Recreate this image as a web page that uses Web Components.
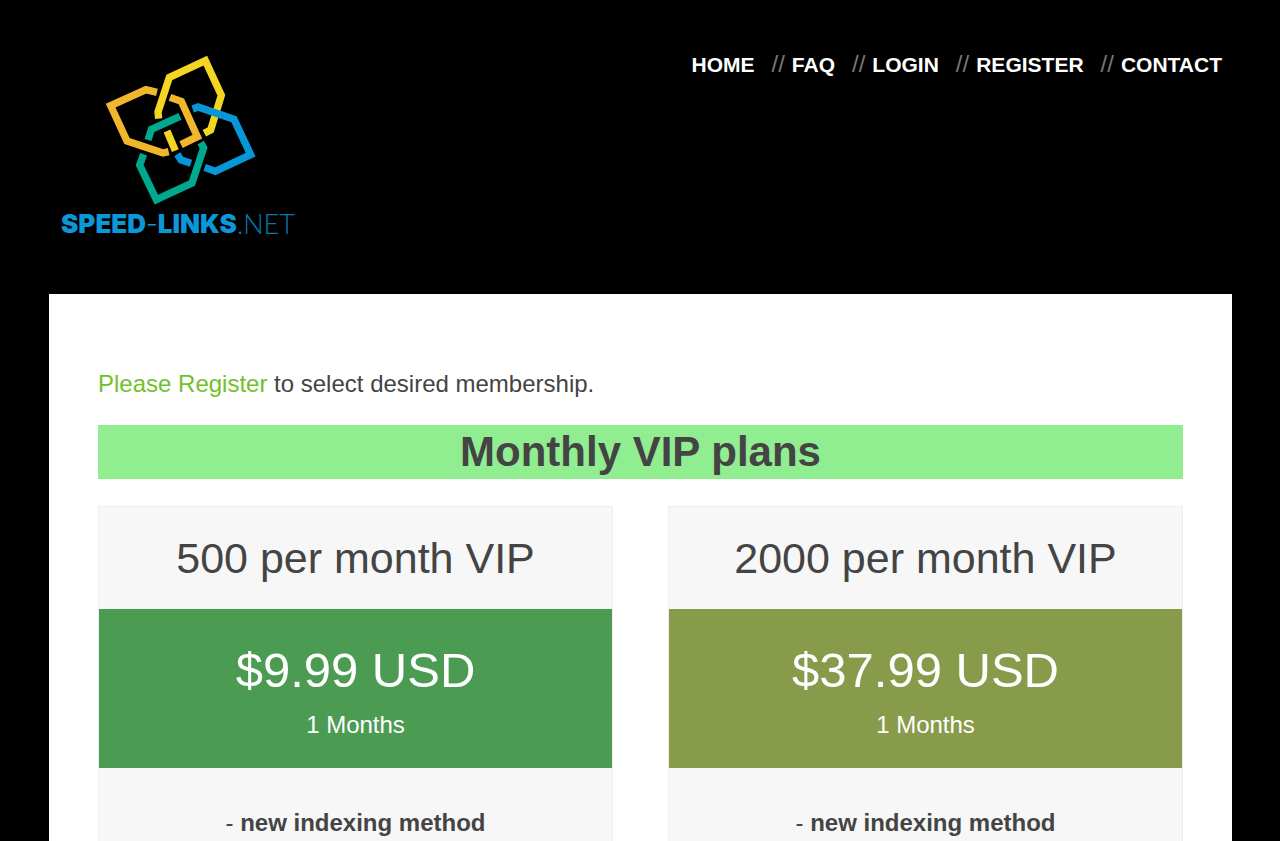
<!DOCTYPE html>
<html lang="en">
<head>
<meta charset="utf-8">
<title>Speed-Links.net</title>
<style>
body { margin: 0; background: #000; color: #444; font: 24px/32px "Liberation Sans", Arial, sans-serif; }
</style>
</head>
<body>
<speed-page></speed-page>
<script>
const define = (name, html) => {
  const template = document.createElement("template");
  template.innerHTML = html;
  customElements.define(name, class extends HTMLElement {
    constructor() {
      super();
      this.attachShadow({ mode: "open" }).append(template.content.cloneNode(true));
    }
  });
};

define("speed-logo", `
<style>
:host { display: block; }
a { display: block; width: 238px; color: #0a98d8; text-decoration: none; }
svg { display: block; width: 180px; height: 170px; margin-left: 29px; }
.name { display: flex; font: 900 26px/28px Inter, sans-serif; white-space: nowrap; }
.thin { font-weight: 300; }
.tld { font: 300 27px/28px Lato, sans-serif; color: #0a78ac; }
</style>
<a href="#">
<svg viewBox="0 0 540 510" fill="none" stroke-width="22" aria-hidden="true">
<path stroke="#f3d522" d="M206 236L204 216L238 112L346 62L394 166L362 270L343 280"/>
<path stroke="#f3d522" d="M231 273L256 332"/>
<path stroke="#f0b62c" d="M201 157L168 149L62 197L111 303L219 339L236 335"/>
<path stroke="#f0b62c" d="M240 172L274 184L322 290L273 314"/>
<path stroke="#00a88f" d="M270 229L184 268L174 300"/>
<path stroke="#00a88f" d="M161 343L149 375L199 479L306 429L341 324L332 308"/>
<path stroke="#0797d9" d="M308 207L324 201L432 238L482 344L376 394L344 382"/>
<path stroke="#0797d9" d="M262 343L273 360L303 370"/>
</svg>
<span class="name"><span>SPEED<span class="thin">-</span>LINKS</span><span class="tld">.NET</span></span>
</a>`);

define("nav-item", `
<style>
:host { display: flex; align-items: baseline; white-space: nowrap; }
:host(:not(:first-child))::before { content: "//"; color: #777; margin-right: 7px; }
::slotted(a) { color: #fff; font-size: 21px; font-weight: bold; text-decoration: none; }
</style><slot></slot>`);

define("site-header", `
<style>
:host { display: flex; justify-content: space-between; align-items: flex-start; padding: 40px 58px 56px 61px; }
nav { display: flex; align-items: baseline; gap: 17px; padding-top: 8px; }
</style>
<speed-logo></speed-logo>
<nav aria-label="Main">
<nav-item><a href="#">HOME</a></nav-item>
<nav-item><a href="#">FAQ</a></nav-item>
<nav-item><a href="#">LOGIN</a></nav-item>
<nav-item><a href="#">REGISTER</a></nav-item>
<nav-item><a href="#">CONTACT</a></nav-item>
</nav>`);

define("plan-card", `
<style>
:host { display: block; border: 1px solid #eee; background: #f7f7f7; text-align: center; }
.title { padding: 26px 16px; }
::slotted(h3) { margin: 0; font-size: 43px; font-weight: normal; line-height: 50px; }
.cost { background: var(--plan-color); color: #fff; padding: 31px 16px 27px; }
.price { font-size: 49px; line-height: 60px; }
.term { padding-top: 9px; }
.details { padding: 39px 16px; }
</style>
<div class="title"><slot name="title"></slot></div>
<div class="cost"><div class="price"><slot name="price"></slot></div><div class="term"><slot name="term"></slot></div></div>
<div class="details"><slot></slot></div>`);

define("section-title", `
<style>
:host { display: block; background: #90ee90; text-align: center; }
h2 { margin: 0; font-size: 42px; line-height: 54px; }
</style><h2><slot></slot></h2>`);

define("speed-page", `
<style>
:host { display: block; }
main { margin: 0 48px 0 49px; padding: 74px 49px; background: #fff; }
p { margin: 0 0 25px; }
p a { color: #72c02c; text-decoration: none; }
.plans { display: grid; grid-template-columns: 1fr 1fr; gap: 55px; margin-top: 27px; }
.green { --plan-color: #4c9b53; }
.olive { --plan-color: #889b4a; }
</style>
<site-header></site-header>
<main>
<p><a href="#">Please Register</a> to select desired membership.</p>
<section-title>Monthly VIP plans</section-title>
<div class="plans">
<plan-card class="green"><h3 slot="title">500 per month VIP</h3><span slot="price">$9.99 USD</span><span slot="term">1 Months</span>- <b>new indexing method</b></plan-card>
<plan-card class="olive"><h3 slot="title">2000 per month VIP</h3><span slot="price">$37.99 USD</span><span slot="term">1 Months</span>- <b>new indexing method</b></plan-card>
</div>
</main>`);
</script>
</body>
</html>
